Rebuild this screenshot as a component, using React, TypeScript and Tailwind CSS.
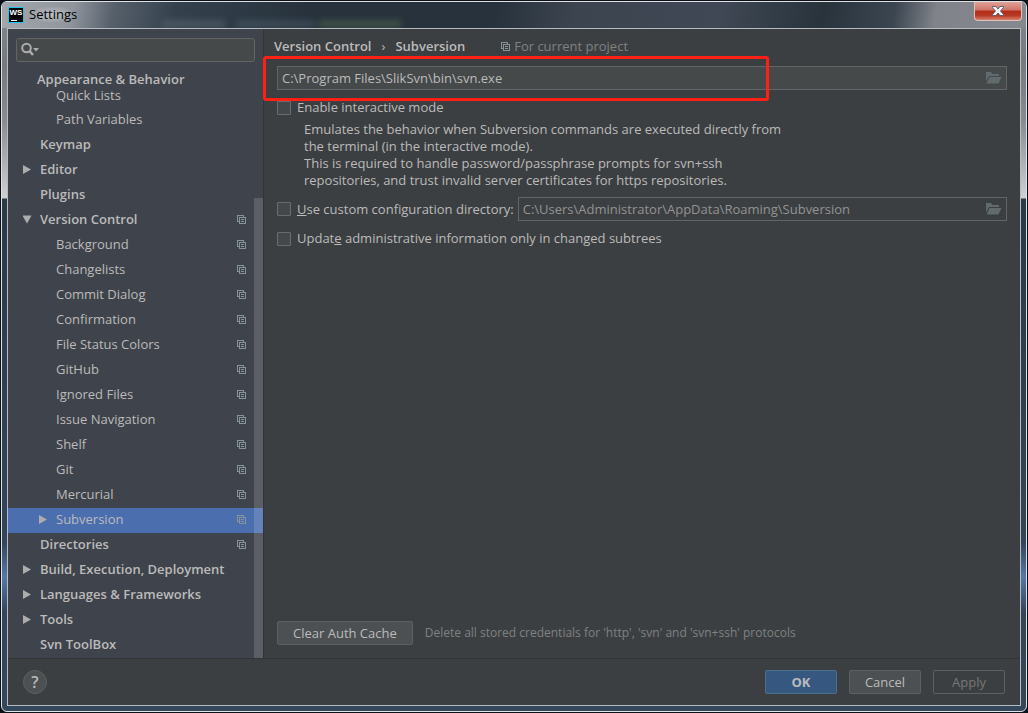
import React from "react";

type Item = {
  label: string;
  level: 0 | 1;
  arrow?: "right" | "down";
  project?: boolean;
  selected?: boolean;
};

const items: Item[] = [
  { label: "Path Variables", level: 1 },
  { label: "Keymap", level: 0 },
  { label: "Editor", level: 0, arrow: "right" },
  { label: "Plugins", level: 0 },
  { label: "Version Control", level: 0, arrow: "down", project: true },
  { label: "Background", level: 1, project: true },
  { label: "Changelists", level: 1, project: true },
  { label: "Commit Dialog", level: 1, project: true },
  { label: "Confirmation", level: 1, project: true },
  { label: "File Status Colors", level: 1, project: true },
  { label: "GitHub", level: 1, project: true },
  { label: "Ignored Files", level: 1, project: true },
  { label: "Issue Navigation", level: 1, project: true },
  { label: "Shelf", level: 1, project: true },
  { label: "Git", level: 1, project: true },
  { label: "Mercurial", level: 1, project: true },
  { label: "Subversion", level: 1, arrow: "right", project: true, selected: true },
  { label: "Directories", level: 0, project: true },
  { label: "Build, Execution, Deployment", level: 0, arrow: "right" },
  { label: "Languages & Frameworks", level: 0, arrow: "right" },
  { label: "Tools", level: 0, arrow: "right" },
  { label: "Svn ToolBox", level: 0 },
];

function ProjectIcon() {
  return (
    <svg className="size-[9px] shrink-0" viewBox="0 0 9 9" fill="none" stroke="#87939a" shapeRendering="crispEdges" aria-hidden="true">
      <path d="M0 .5H7M.5 0V7M0 6.5H2M6.5 0V2" />
      <rect x="2.5" y="2.5" width="6" height="6" />
      <path d="M4 4.5H7M4 6.5H7" />
    </svg>
  );
}

function Arrow({ dir }: { dir: "right" | "down" }) {
  return (
    <svg className="size-[9px] shrink-0" viewBox="0 0 9 9" fill="#adadad" aria-hidden="true">
      {dir === "right" ? <path d="M0 0 8 4.5 0 9Z" /> : <path d="M-.5 .5H8.500L4 8.500Z" />}
    </svg>
  );
}

function FolderIcon() {
  return (
    <svg className="h-3 w-4" viewBox="0 0 16 12" fill="#616a6d" aria-hidden="true">
      <path d="M0 0H5L6.5 2H13V4H3L0 9.500Z" />
      <path d="M3.500 5H15.500L12.500 11.500H.5Z" />
    </svg>
  );
}

function PathField({ label, value, muted }: { label: string; value: string; muted?: boolean }) {
  return (
    <div className={`flex h-6 min-w-0 flex-1 items-center border border-[#646464] pr-1 ${muted ? "bg-[#3c3f41]" : "bg-[#45494a]"}`}>
      <input
        aria-label={label}
        defaultValue={value}
        className={`min-w-0 flex-1 bg-transparent px-1 outline-none ${muted ? "text-[#939393]" : "text-[#bbbbbb]"}`}
      />
      <button type="button" aria-label="Browse">
        <FolderIcon />
      </button>
    </div>
  );
}

function Check({ id, children }: { id: string; children: React.ReactNode }) {
  return (
    <div className="flex shrink-0 items-center gap-1.5">
      <input id={id} type="checkbox" className="size-3.5 appearance-none rounded-[1px] border border-[#6b6b6b] bg-[#43494a] checked:bg-[#4b6eaf]" />
      <label htmlFor={id}>{children}</label>
    </div>
  );
}

function TreeRow({ item }: { item: Item }) {
  const selected = item.selected ? "bg-[#4b6eaf]" : "";
  const indent = item.level === 1 ? "pl-[31px]" : "pl-[15px]";
  return (
    <li>
      <button type="button" className={`flex h-[25px] w-full items-center pr-[17px] pb-0.5 text-left ${indent} ${selected}`}>
        <span className="flex w-[17px] shrink-0 items-center">{item.arrow && <Arrow dir={item.arrow} />}</span>
        <span className={`flex-1 whitespace-nowrap ${item.level === 0 ? "font-semibold" : ""}`}>{item.label}</span>
        {item.project && <ProjectIcon />}
      </button>
    </li>
  );
}

export default function App() {
  return (
    <div className="flex min-h-screen bg-[#0c1118] p-px font-['Open_Sans','Noto_Sans',sans-serif] text-[13px] leading-[17px] text-[#bbbbbb]">
      <div className="flex flex-1 flex-col overflow-hidden rounded-[6px] border border-[#dfe3e8] bg-[linear-gradient(180deg,#85898f_0px,#77797f_60px,#8b8b92_120px,#d0d0d2_196px,#2b3a47_197px,#34455a_540px,#5578a8_575px,#34455a_610px,#35475a_100%)]">
        <header className="relative flex h-[26px] items-start overflow-hidden bg-[linear-gradient(100deg,#a2a7ae_0%,#90959c_7%,#56606b_11%,#34414d_17%,#27323c_30%,#27323c_48%,#3c4450_56%,#3f4854_70%,#28333c_80%,#3c4651_87%,#80838a_91%,#85888f_100%)] pl-1.5">
          <div className="flex flex-1 items-center gap-[5px] pt-1">
            <span className="flex size-4 flex-col justify-between border border-[#20c4e8] bg-black pb-px text-center font-['Liberation_Sans',sans-serif] text-[8px] leading-[9px] font-bold text-white">
              WS
              <span className="ml-0.5 h-px w-1.5 bg-white" />
            </span>
            <h1 className="bg-[radial-gradient(closest-side,#ffffff66,transparent)] text-black">Settings</h1>
          </div>
          <div className="absolute top-[18px] left-[160px] h-2 w-16 rounded bg-[#8a97a0]/25 blur-[3px]" />
          <div className="absolute top-[18px] left-[234px] h-2 w-20 rounded bg-[#6f8a9a]/25 blur-[3px]" />
          <div className="absolute top-[18px] left-[316px] h-2 w-[84px] rounded bg-[#6a8759]/35 blur-[3px]" />
          <button
            type="button"
            aria-label="Close"
            className="mr-1 flex h-[19px] w-12 items-center justify-center rounded-b-[4px] border border-t-0 border-[#e2c0bc] bg-[linear-gradient(180deg,#e0a299_0%,#cf7468_45%,#b42b16_50%,#b63a25_75%,#d8816c_100%)]"
          >
            <svg className="h-2.5 w-3" viewBox="0 0 12 10" aria-hidden="true">
              <path d="M.5.5H4L6 3 8 .5H11.500V1.500L8.500 5 11.500 8.500V9.500H8L6 7 4 9.500H.5V8.500L3.500 5 .5 1.500Z" fill="#f5f5f5" stroke="#535666" strokeWidth=".9" />
            </svg>
          </button>
        </header>

        <div className="mx-[5px] mb-[5px] flex flex-1 flex-col border border-[#b4bcc2] bg-[#3c3f41]">
          <div className="flex flex-1">
            <aside className="relative flex w-64 shrink-0 flex-col border-r border-[#323435] bg-[#3f434b]">
              <label className="mx-2 mt-[9px] flex h-6 items-center rounded-[3px] border border-[#646464] bg-[#45494a] pl-1">
                <svg className="h-4 w-[19px] shrink-0" viewBox="0 0 19 16" fill="none" aria-hidden="true">
                  <circle cx="5.500" cy="6" r="4.300" stroke="#adadad" strokeWidth="2" />
                  <path d="M8.500 9 12 13" stroke="#adadad" strokeWidth="2.500" />
                  <path d="M12 6H18L15 9.500Z" fill="#adadad" />
                </svg>
                <input aria-label="Search settings" className="min-w-0 flex-1 bg-transparent outline-none" />
              </label>
              <nav aria-label="Settings categories" className="pt-[9px]">
                <h2 className="pl-[29px] leading-4 font-semibold">Appearance &amp; Behavior</h2>
                <ul>
                  <li className="flex pb-[5px] pl-12">
                    <button type="button" className="leading-4">Quick Lists</button>
                  </li>
                  {items.map((item) => (
                    <TreeRow key={item.label} item={item} />
                  ))}
                </ul>
              </nav>
              <div className="absolute top-[169px] right-0 bottom-0 w-[9px] bg-white/15" />
            </aside>

            <main className="relative flex min-w-0 flex-1 flex-col pr-[13px] pb-[13px] pl-[13px]">
              <div className="-ml-[3px] flex h-[37px] items-center pb-0.5 font-semibold">
                <span>Version Control</span>
                <span className="w-6 text-center font-normal">›</span>
                <span>Subversion</span>
                <span className="ml-9 flex items-center gap-1 font-normal text-[#7f8182]">
                  <ProjectIcon />
                  For current project
                </span>
              </div>
              <div className="flex">
                <PathField label="Subversion client path" value="C:\Program Files\SlikSvn\bin\svn.exe" />
              </div>
              <div className="absolute top-[27px] -left-px h-[45px] w-[506px] rounded-[3px] border-[3px] border-[#ff2015]" />
              <div className="mt-[9px]">
                <Check id="interactive">Enable interactive mode</Check>
                <p className="mt-[5px] ml-[27px]">
                  Emulates the behavior when Subversion commands are executed directly from
                  <br />
                  the terminal (in the interactive mode).
                  <br />
                  This is required to handle password/passphrase prompts for svn+ssh
                  <br />
                  repositories, and trust invalid server certificates for https repositories.
                </p>
              </div>
              <div className="mt-2 flex items-center gap-1">
                <Check id="config">
                  <u>U</u>se custom configuration directory:
                </Check>
                <PathField label="Configuration directory" value="C:\Users\Administrator\AppData\Roaming\Subversion" muted />
              </div>
              <div className="mt-[9px]">
                <Check id="update">
                  Updat<u>e</u> administrative information only in changed subtrees
                </Check>
              </div>
              <div className="mt-auto flex items-center gap-3">
                <button type="button" className="h-6 rounded-[2px] border border-[#5e6060] bg-[#4c5052] px-[15px]">Clear Auth Cache</button>
                <span className="text-xs text-[#7f8182]">Delete all stored credentials for 'http', 'svn' and 'svn+ssh' protocols</span>
              </div>
            </main>
          </div>

          <footer className="flex h-[47px] items-center gap-3 border-t border-[#323435] pr-[15px] pl-[15px]">
            <button type="button" aria-label="Help" className="mr-auto flex size-6 items-center justify-center rounded-full border border-[#5e6060] bg-[#4c5052] text-base font-semibold">?</button>
            <button type="button" className="h-6 w-[72px] rounded-[2px] border border-[#4c708c] bg-[#365880] font-bold">OK</button>
            <button type="button" className="h-6 w-[72px] rounded-[2px] border border-[#5e6060] bg-[#4c5052]">Cancel</button>
            <button type="button" disabled className="h-6 w-[72px] rounded-[2px] border border-[#5e6060] text-[#777777]">Apply</button>
          </footer>
        </div>
      </div>
    </div>
  );
}
